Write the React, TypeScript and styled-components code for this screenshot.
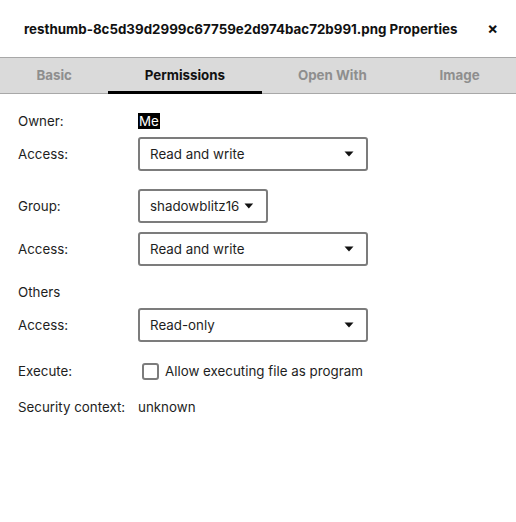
import React from "react";
import styled, { createGlobalStyle } from "styled-components";

const Global = createGlobalStyle`
  html, body { margin: 0; padding: 0; background: #fff; }
  body { font-family: Inter, "Noto Sans", sans-serif; color: #1e1e1e; }
`;

const Window = styled.div`
  width: 516px;
  height: 522px;
  background: #fff;
  display: flex;
  flex-direction: column;
  border-top-right-radius: 8px;
  overflow: hidden;
`;

const TitleBar = styled.div`
  height: 57px;
  display: flex;
  align-items: center;
  padding: 0 18px 0 24px;
  box-sizing: border-box;
`;

const Title = styled.div`
  flex: 1;
  font-size: 13.35px;
  font-weight: 700;
  color: #111;
`;

const Close = styled.div`
  font-size: 16px;
  font-weight: 700;
  color: #111;
  line-height: 1;
  margin-top: -1px;
`;

const TabBar = styled.div`
  display: flex;
  height: 37px;
  background: #dadada;
  border-top: 1px solid #a8a8a8;
  border-bottom: 1px solid #a8a8a8;
  box-sizing: border-box;
`;

const Tab = styled.div<{ $active?: boolean }>`
  flex: 1 1 auto;
  display: flex;
  align-items: center;
  justify-content: center;
  padding-bottom: 2px;
  font-size: 13.35px;
  font-weight: 700;
  color: ${(p) => (p.$active ? "#111" : "#8e8e8e")};
  box-shadow: ${(p) => (p.$active ? "inset 0 -3px 0 #000" : "none")};
  margin-bottom: ${(p) => (p.$active ? "-1px" : "0")};
`;

const Content = styled.div`
  display: flex;
  flex-direction: column;
  padding: 1px 0 0 18px;
  font-size: 13.35px;
`;

const Row = styled.div<{ $top: number; $h: number }>`
  display: grid;
  grid-template-columns: 120px auto;
  align-items: center;
  margin-top: ${(p) => p.$top}px;
  height: ${(p) => p.$h}px;
`;

const Label = styled.span`
  color: #1e1e1e;
`;

const Selected = styled.span`
  justify-self: start;
  background: #000;
  color: #fff;
  line-height: 16px;
  padding: 0 1px;
`;

const Select = styled.div<{ $w: number }>`
  width: ${(p) => p.$w}px;
  height: 34px;
  box-sizing: border-box;
  border: 2px solid #7c7c7c;
  border-radius: 3px;
  display: flex;
  align-items: center;
  padding: 0 12px 0 10px;
  gap: 5px;
  color: #1e1e1e;
`;

const SelectText = styled.span`
  flex: 1;
  margin-top: -1px;
`;

const Arrow = () => (
  <svg width="10" height="6" viewBox="0 0 10 6">
    <path d="M0.5 0.5H9.5L5 5.5Z" fill="#111" />
  </svg>
);

const CheckRow = styled.div`
  display: flex;
  align-items: center;
  gap: 6px;
  padding-left: 4px;
`;

const Box = styled.div`
  width: 17px;
  height: 17px;
  box-sizing: border-box;
  border: 2px solid #7c7c7c;
  border-radius: 3px;
`;

export default function App() {
  return (
    <Window>
      <Global />
      <TitleBar>
        <Title>resthumb-8c5d39d2999c67759e2d974bac72b991.png Properties</Title>
        <Close>×</Close>
      </TitleBar>
      <TabBar>
        <Tab>Basic</Tab>
        <Tab $active>Permissions</Tab>
        <Tab>Open With</Tab>
        <Tab>Image</Tab>
      </TabBar>
      <Content>
        <Row $top={18} $h={16}>
          <Label>Owner:</Label>
          <Selected>Me</Selected>
        </Row>
        <Row $top={8} $h={34}>
          <Label>Access:</Label>
          <Select $w={230}>
            <SelectText>Read and write</SelectText>
            <Arrow />
          </Select>
        </Row>
        <Row $top={18} $h={34}>
          <Label>Group:</Label>
          <Select $w={130}>
            <SelectText>shadowblitz16</SelectText>
            <Arrow />
          </Select>
        </Row>
        <Row $top={9} $h={34}>
          <Label>Access:</Label>
          <Select $w={230}>
            <SelectText>Read and write</SelectText>
            <Arrow />
          </Select>
        </Row>
        <Row $top={18} $h={16}>
          <Label>Others</Label>
        </Row>
        <Row $top={8} $h={34}>
          <Label>Access:</Label>
          <Select $w={230}>
            <SelectText>Read-only</SelectText>
            <Arrow />
          </Select>
        </Row>
        <Row $top={20} $h={18}>
          <Label>Execute:</Label>
          <CheckRow>
            <Box />
            <span>Allow executing file as program</span>
          </CheckRow>
        </Row>
        <Row $top={19} $h={16}>
          <Label>Security context:</Label>
          <span>unknown</span>
        </Row>
      </Content>
    </Window>
  );
}
